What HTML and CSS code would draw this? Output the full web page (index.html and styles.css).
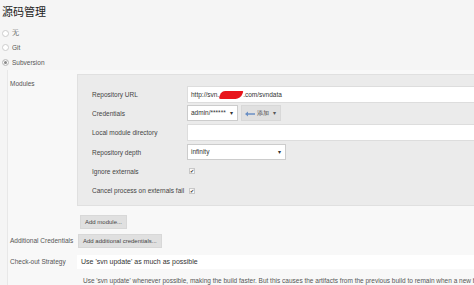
FILE: index.html
```html
<!DOCTYPE html>
<html lang="zh">
<head>
    <meta charset="UTF-8">
    <title>源码管理</title>
    <link rel="stylesheet" href="styles.css">
</head>
<body>
    <div class="page">
        <h2 class="title">源码管理</h2>
        <div class="radios">
            <label class="radio"><span class="dot"></span>无</label>
            <label class="radio"><span class="dot"></span>Git</label>
            <label class="radio"><span class="dot on"></span>Subversion</label>
        </div>

        <div class="section">
            <div class="row">
                <div class="row-label modules">Modules</div>
                <div class="row-body">
                    <div class="module">
                        <div class="field">
                            <div class="field-label">Repository URL</div>
                            <div class="input url">http://svn.<span class="smudge"></span>.com/svndata</div>
                        </div>
                        <div class="field">
                            <div class="field-label">Credentials</div>
                            <div class="select cred">admin/******<span class="caret">&#9662;</span></div>
                            <div class="btn add">
                                <svg width="10" height="6" viewBox="0 0 10 6"><path d="M0 3 L3 0.5 L3 2.2 L10 2.2 L10 3.8 L3 3.8 L3 5.5 Z" fill="#6a8fc4"/></svg>
                                添加<span class="caret">&#9662;</span>
                            </div>
                        </div>
                        <div class="field">
                            <div class="field-label">Local module directory</div>
                            <div class="input"></div>
                        </div>
                        <div class="field">
                            <div class="field-label">Repository depth</div>
                            <div class="select depth">infinity<span class="caret">&#9662;</span></div>
                        </div>
                        <div class="field">
                            <div class="field-label">Ignore externals</div>
                            <span class="check">&#10004;</span>
                        </div>
                        <div class="field">
                            <div class="field-label">Cancel process on externals fail</div>
                            <span class="check">&#10004;</span>
                        </div>
                    </div>
                    <div class="btn module-btn">Add module...</div>
                </div>
            </div>
            <div class="row creds">
                <div class="row-label">Additional Credentials</div>
                <div class="row-body">
                    <div class="btn cred-btn">Add additional credentials...</div>
                </div>
            </div>
            <div class="row strategy-row">
                <div class="row-label">Check-out Strategy</div>
                <div class="row-body">
                    <div class="input strategy">Use 'svn update' as much as possible</div>
                </div>
            </div>
            <div class="desc">Use 'svn update' whenever possible, making the build faster. But this causes the artifacts from the previous build to remain when a new build starts.</div>
        </div>
    </div>
</body>
</html>
```

FILE: styles.css
```css
body {
    margin: 0;
    background-color: #f5f5f5;
    font-family: 'Liberation Sans', Arial, sans-serif;
    font-size: 6.5px;
    color: #444;
    overflow: hidden;
}
.page {
    width: 474px;
    height: 285px;
    overflow: hidden;
}
.title {
    margin: 0;
    padding: 5px 0 0 2px;
    font-size: 11px;
    font-weight: normal;
    color: #222;
    line-height: 13px;
    font-family: 'Noto Sans CJK SC', sans-serif;
}
.radios {
    padding: 8px 0 0 2px;
}
.radio {
    display: flex;
    align-items: center;
    height: 14.5px;
    color: #555;
}
.dot {
    width: 5px;
    height: 5px;
    border-radius: 50%;
    border: 1px solid #ccc;
    background-color: #fff;
    margin-right: 3px;
}
.dot.on {
    background-color: #888;
    box-shadow: inset 0 0 0 1px #fff;
}
.section {
    padding-top: 4px;
    margin-left: 7px;
    background-color: #f8f8f8;
    border-left: 1px solid #e8e8e8;
}
.row {
    display: flex;
}
.row-label {
    box-sizing: border-box;
    width: 69px;
    flex-shrink: 0;
    padding-left: 2px;
    color: #555;
    white-space: nowrap;
}
.modules {
    padding-top: 6px;
}
.row-body {
    flex: 1;
}
.module {
    background-color: #ebebeb;
    border: 1px solid #e0e0e0;
    border-right: none;
    padding: 10px 0 8px 14px;
    height: 112px;
}
.field {
    display: flex;
    align-items: center;
    height: 19.3px;
}
.field-label {
    width: 95px;
    flex-shrink: 0;
    white-space: nowrap;
}
.input {
    flex: 1;
    height: 15px;
    line-height: 15px;
    background-color: #fff;
    border: 1px solid #ddd;
    border-right: none;
    padding-left: 3px;
    color: #333;
    white-space: nowrap;
    overflow: hidden;
}
.smudge {
    display: inline-block;
    width: 22px;
    height: 8px;
    margin: 0 1px;
    background-color: #e8141b;
    border-radius: 4px 1px 5px 2px;
    vertical-align: middle;
    transform: skewX(-20deg);
}
.select {
    position: relative;
    height: 14px;
    line-height: 14px;
    background-color: #fff;
    border: 1px solid #ccc;
    padding-left: 3px;
    color: #333;
}
.caret {
    font-size: 6px;
    margin-left: 4px;
    color: #333;
}
.select .caret {
    position: absolute;
    right: 4px;
    top: 0;
}
.cred {
    width: 46px;
}
.depth {
    width: 94px;
}
.btn {
    display: inline-block;
    background-color: #e0e0e0;
    border: 1px solid #d8d8d8;
    color: #444;
    font-size: 6px;
    padding: 0 4px;
    height: 12px;
    line-height: 12px;
}
.add {
    margin-left: 3px;
    height: 14px;
    line-height: 14px;
    padding: 0 4px 0 3px;
}
.add svg {
    vertical-align: middle;
}
.add .caret {
    color: #555;
}
.check {
    display: inline-block;
    box-sizing: border-box;
    width: 6px;
    height: 6px;
    line-height: 5px;
    text-align: center;
    font-size: 5px;
    color: #333;
    border: 1px solid #c8c8c8;
    background-color: #fafafa;
    margin-left: 2px;
}
.module-btn {
    margin: 9px 0 0 3px;
}
.creds {
    margin-top: 5px;
}
.creds .row-label {
    line-height: 14px;
}
.cred-btn {
    margin-left: 1px;
}
.strategy-row {
    margin-top: 7px;
}
.strategy-row .row-label {
    line-height: 14px;
}
.strategy {
    height: 14px;
    line-height: 14px;
    border: none;
    padding-left: 4px;
    font-size: 7px;
}
.desc {
    padding: 8px 0 10px 75px;
    white-space: nowrap;
    color: #555;
}
```
